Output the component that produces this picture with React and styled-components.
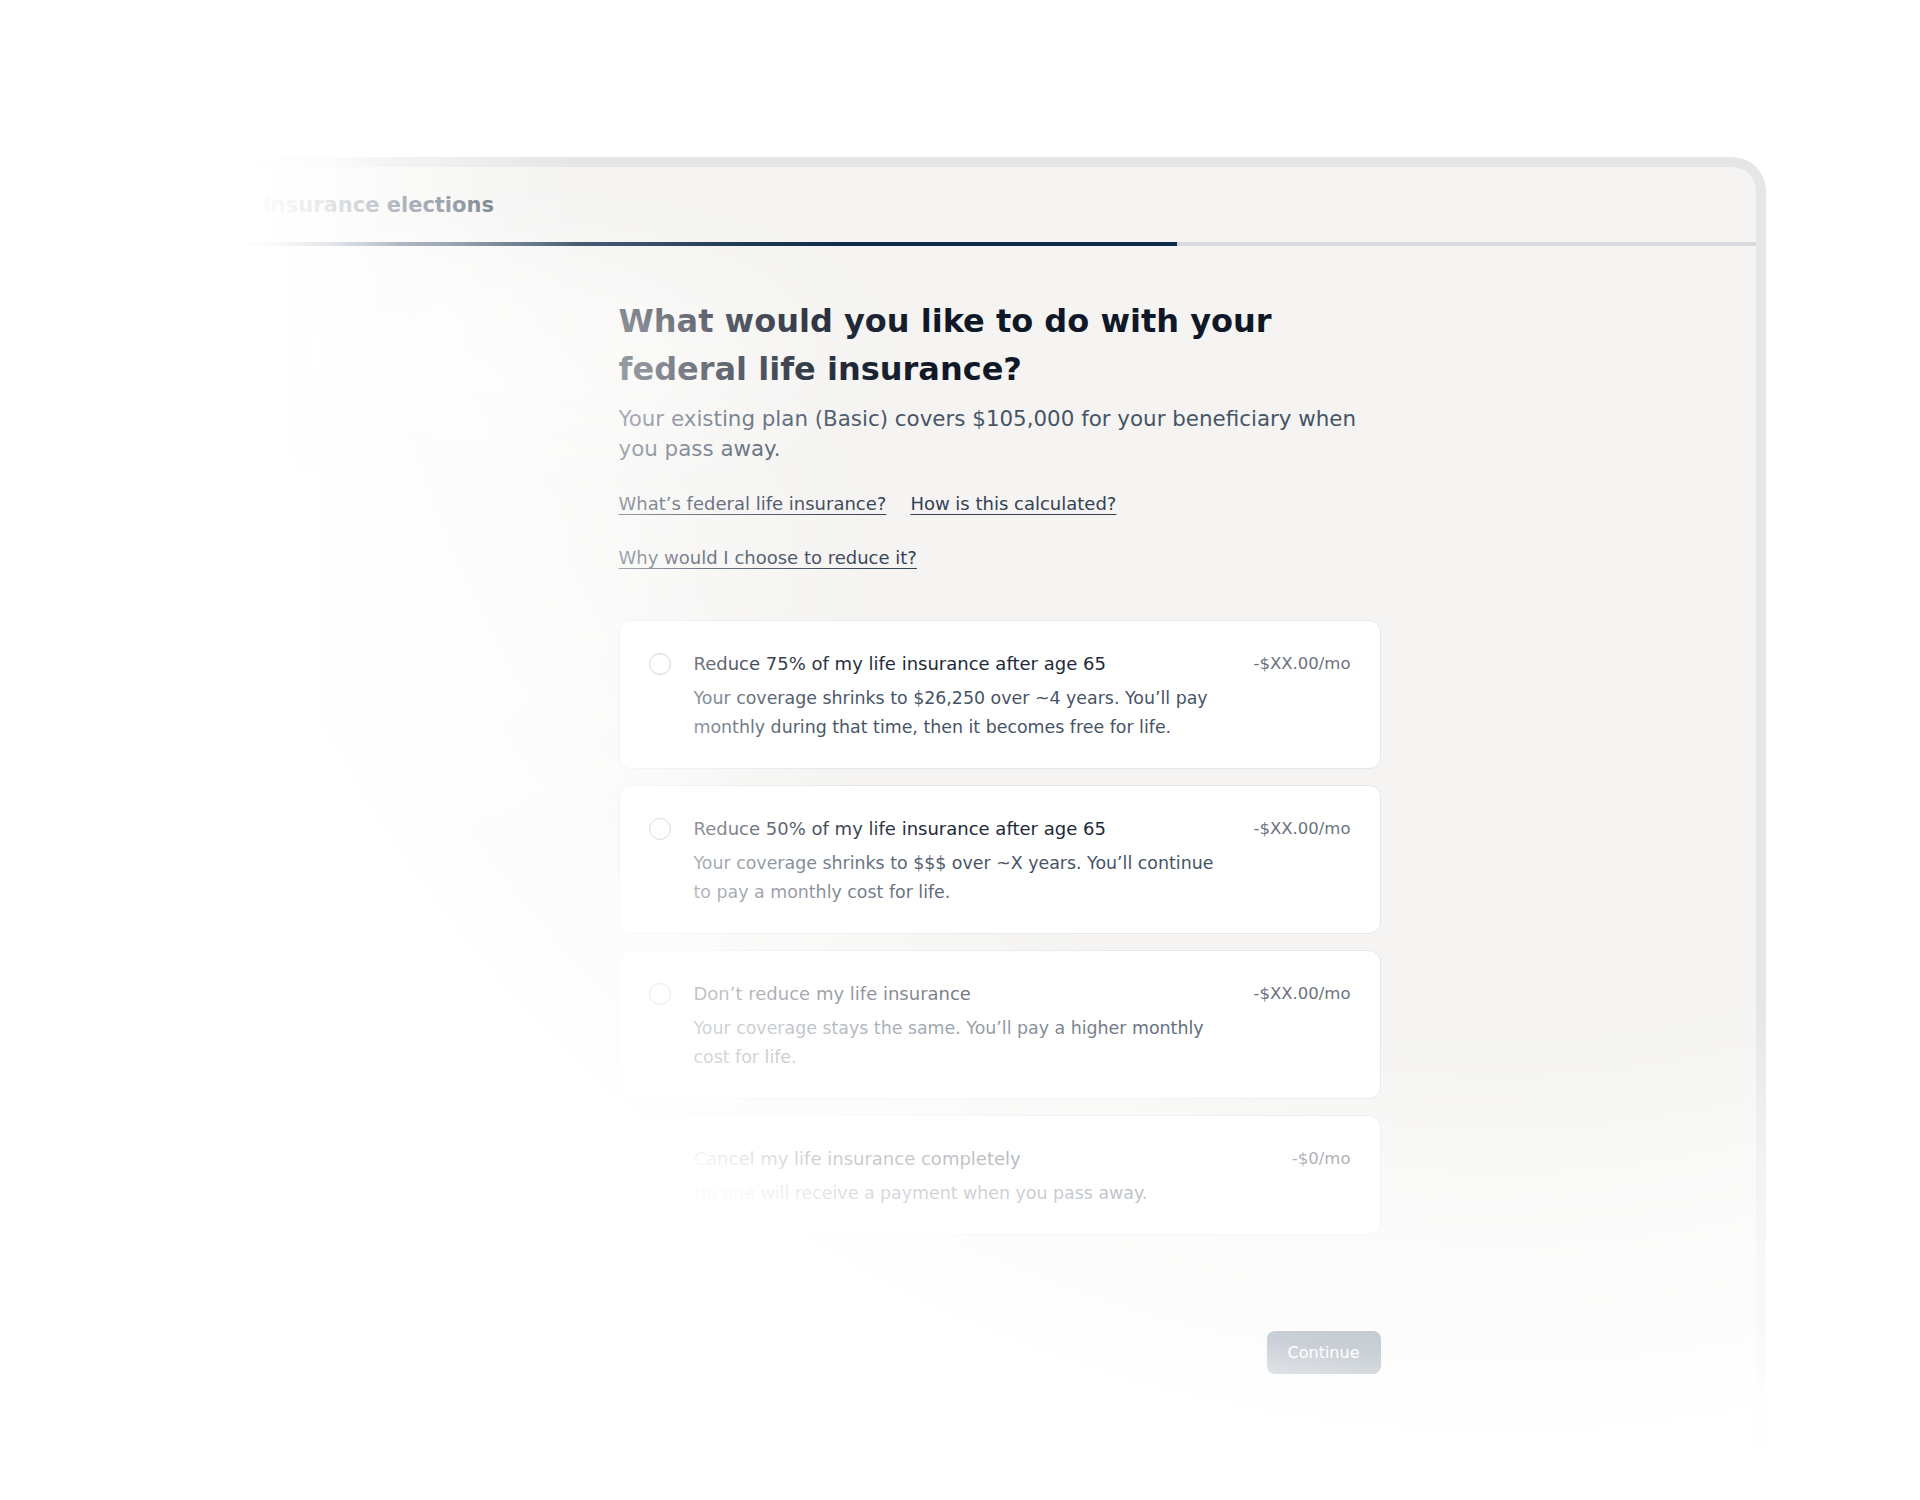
import React from 'react';
import styled, { createGlobalStyle } from 'styled-components';

const GlobalStyle = createGlobalStyle`
  html, body {
    margin: 0;
    padding: 0;
    background: #ffffff;
  }
  body {
    font-family: "DejaVu Sans", "Noto Sans", "Liberation Sans", sans-serif;
    -webkit-font-smoothing: antialiased;
  }
`;

const Page = styled.div`
  position: relative;
  width: 1920px;
  height: 1500px;
  overflow: hidden;
  padding-top: 157px;
  box-sizing: border-box;
  background: #ffffff;
`;

const Frame = styled.div`
  margin-left: 233px;
  width: 1533px;
  height: 1343px;
  box-sizing: border-box;
  border: 10px solid #e6e6e6;
  border-bottom: none;
  border-radius: 34px 34px 0 0;
  background: #f5f4f2;
  display: flex;
  flex-direction: column;
`;

const Header = styled.div`
  height: 75px;
  display: flex;
  align-items: center;
  padding-left: 20px;
`;

const HeaderTitle = styled.span`
  font-size: 21px;
  font-weight: 700;
  color: #475467;
`;

const Progress = styled.div`
  height: 4px;
  background: #d9dadd;
`;

const ProgressFill = styled.div`
  height: 100%;
  width: ${(p) => p.$value}%;
  background: #0e2a47;
`;

const Main = styled.main`
  width: 762px;
  margin: 51px auto 0;
`;

const Heading = styled.h1`
  margin: 0;
  font-size: 32px;
  line-height: 48px;
  font-weight: 700;
  color: #101828;
`;

const Subtitle = styled.p`
  margin: 11px 0 0;
  font-size: 21.4px;
  line-height: 30px;
  color: #475467;
`;

const Links = styled.div`
  display: flex;
  flex-wrap: wrap;
  gap: 28px 24px;
  margin-top: 27px;
`;

const HelpLink = styled.a`
  font-size: 18px;
  line-height: 26px;
  color: #344054;
  text-decoration: underline;
  text-underline-offset: 4px;
  text-decoration-thickness: 1px;
  cursor: pointer;
`;

const Options = styled.div`
  display: flex;
  flex-direction: column;
  gap: 16px;
  margin-top: 49px;
`;

const Card = styled.label`
  display: grid;
  grid-template-columns: 22px 1fr auto;
  column-gap: 23px;
  padding: 30px 29px 26px 29px;
  background: #ffffff;
  border: 1px solid #e4e7ec;
  border-radius: 12px;
  cursor: pointer;
`;

const Radio = styled.span`
  width: 22px;
  height: 22px;
  box-sizing: border-box;
  margin-top: 2px;
  border-radius: 50%;
  border: 1.5px solid #a7aeb9;
  background: #ffffff;
`;

const Body = styled.div`
  display: flex;
  flex-direction: column;
  gap: 7px;
`;

const Title = styled.span`
  font-size: 18px;
  line-height: 26px;
  color: #1d2939;
`;

const Description = styled.span`
  max-width: 535px;
  font-size: 17.4px;
  line-height: 29px;
  color: #475467;
`;

const Price = styled.span`
  font-size: 16.5px;
  line-height: 26px;
  color: #6b7280;
`;

const Footer = styled.div`
  display: flex;
  justify-content: flex-end;
  margin-top: 96px;
`;

const ContinueButton = styled.button`
  height: 43px;
  padding: 0 21px;
  border: none;
  border-radius: 8px;
  background: #0e2a47;
  color: #ffffff;
  font-family: inherit;
  font-size: 16px;
`;

/* white veil that fades the mockup out toward the lower left */
const Fade = styled.div`
  position: absolute;
  inset: 0;
  pointer-events: none;
  background:
    linear-gradient(to right, #ffffff 0, #ffffff 240px, rgba(255, 255, 255, 0.85) 275px, rgba(255, 255, 255, 0) 400px),
    radial-gradient(
      ellipse 330px 135px at 520px 345px,
      rgba(255, 255, 255, 0.5) 0%,
      rgba(255, 255, 255, 0.42) 40%,
      rgba(255, 255, 255, 0.22) 75%,
      rgba(255, 255, 255, 0.08) 100%,
      rgba(255, 255, 255, 0) 125%
    ),
    radial-gradient(
      ellipse 500px 300px at 250px 560px,
      rgba(255, 255, 255, 0.55) 0%,
      rgba(255, 255, 255, 0.5) 60%,
      rgba(255, 255, 255, 0.36) 85%,
      rgba(255, 255, 255, 0.25) 96%,
      rgba(255, 255, 255, 0.12) 110%,
      rgba(255, 255, 255, 0.03) 124%,
      rgba(255, 255, 255, 0) 136%
    ),
    radial-gradient(
      circle at 1500px 100px,
      rgba(255, 255, 255, 0) 930px,
      rgba(255, 255, 255, 0.2) 1000px,
      rgba(255, 255, 255, 0.42) 1060px,
      rgba(255, 255, 255, 0.7) 1180px,
      rgba(255, 255, 255, 0.78) 1260px,
      rgba(255, 255, 255, 0.96) 1330px,
      #ffffff 1410px
    );
`;

const options = [
  {
    title: 'Reduce 75% of my life insurance after age 65',
    text: 'Your coverage shrinks to $26,250 over ~4 years. You’ll pay monthly during that time, then it becomes free for life.',
    price: '-$XX.00/mo',
  },
  {
    title: 'Reduce 50% of my life insurance after age 65',
    text: 'Your coverage shrinks to $$$ over ~X years. You’ll continue to pay a monthly cost for life.',
    price: '-$XX.00/mo',
  },
  {
    title: 'Don’t reduce my life insurance',
    text: 'Your coverage stays the same. You’ll pay a higher monthly cost for life.',
    price: '-$XX.00/mo',
  },
  {
    title: 'Cancel my life insurance completely',
    text: 'No one will receive a payment when you pass away.',
    price: '-$0/mo',
  },
];

export default function App() {
  return (
    <>
      <GlobalStyle />
      <Page>
        <Frame>
          <Header>
            <HeaderTitle>Insurance elections</HeaderTitle>
          </Header>
          <Progress>
            <ProgressFill $value={61.7} />
          </Progress>
          <Main>
            <Heading>
              What would you like to do with your
              <br />
              federal life insurance?
            </Heading>
            <Subtitle>
              Your existing plan (Basic) covers $105,000 for your beneficiary when you pass away.
            </Subtitle>
            <Links>
              <HelpLink>What’s federal life insurance?</HelpLink>
              <HelpLink>How is this calculated?</HelpLink>
              <HelpLink>Why would I choose to reduce it?</HelpLink>
            </Links>
            <Options>
              {options.map((o) => (
                <Card key={o.title}>
                  <Radio />
                  <Body>
                    <Title>{o.title}</Title>
                    <Description>{o.text}</Description>
                  </Body>
                  <Price>{o.price}</Price>
                </Card>
              ))}
            </Options>
            <Footer>
              <ContinueButton disabled>Continue</ContinueButton>
            </Footer>
          </Main>
        </Frame>
        <Fade />
      </Page>
    </>
  );
}
